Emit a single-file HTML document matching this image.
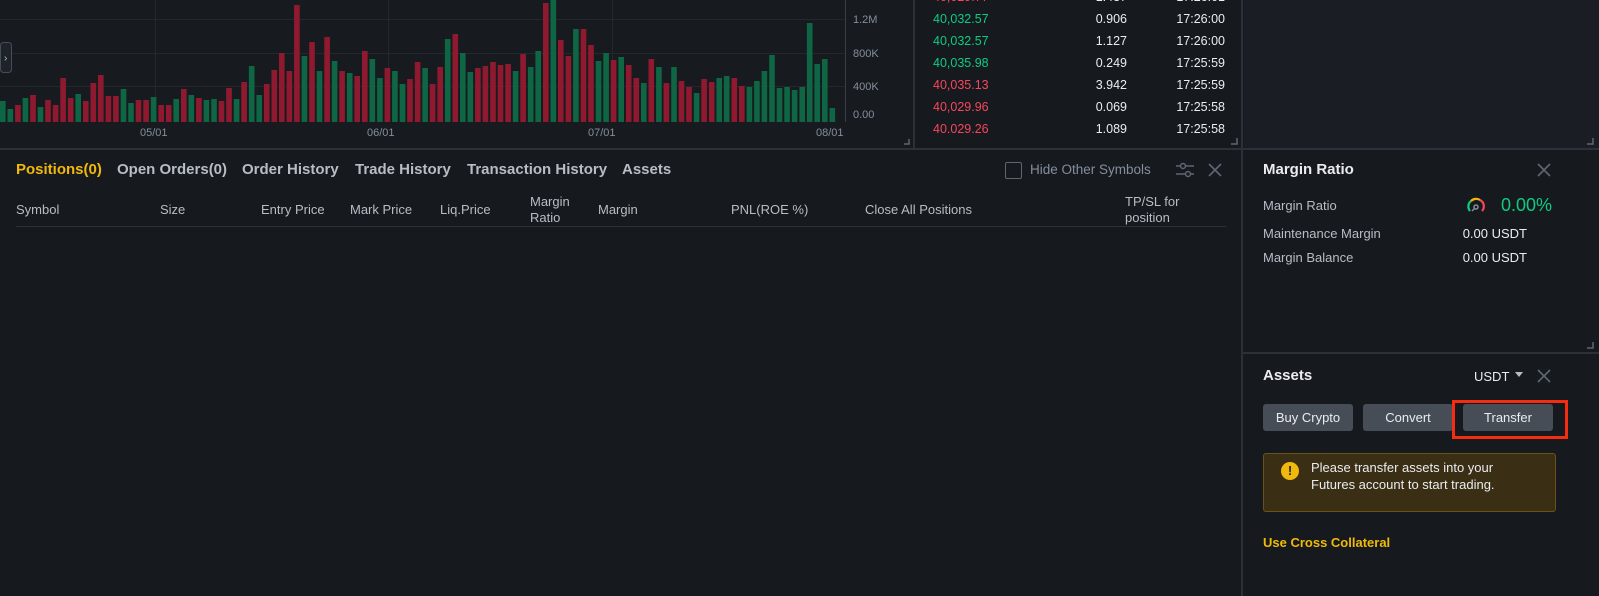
<!DOCTYPE html>
<html><head><meta charset="utf-8"><style>
*{margin:0;padding:0;box-sizing:border-box}
body{width:1599px;height:596px;background:#161a1e;font-family:"Liberation Sans",sans-serif;position:relative;overflow:hidden;color:#eaecef}
.a{position:absolute;white-space:nowrap}
.g{color:#0ecb81}.r{color:#f6465d}
.hl{position:absolute;background:#2b3139}
.tab{position:absolute;top:161px;font-size:15px;color:#b7bdc6;font-weight:bold}
.th{position:absolute;font-size:13px;color:#b7bdc6;line-height:16px}
.btn{position:absolute;top:404px;width:90px;height:27px;background:#474d57;border-radius:3px;color:#eaecef;font-size:13px;text-align:center;line-height:27px}
</style></head><body>
<div class="a" style="left:0;top:0;width:913px;height:148px;background:#171b20"></div>
<div class="a" style="left:1244px;top:0;width:355px;height:148px;background:#1a1e24"></div>
<div class="hl" style="left:0;top:148px;width:1599px;height:2px"></div>
<div class="hl" style="left:913px;top:0;width:2px;height:148px"></div>
<div class="hl" style="left:1241px;top:0;width:2px;height:596px"></div>
<div class="hl" style="left:1243px;top:352px;width:356px;height:2px"></div>
<svg class="a" style="left:0;top:0" width="913" height="148" id="ch">
<g stroke="#23272e" stroke-width="1">
<line x1="0" y1="19.5" x2="845" y2="19.5"/><line x1="0" y1="53.5" x2="845" y2="53.5"/><line x1="0" y1="86.5" x2="845" y2="86.5"/>
<line x1="155.5" y1="0" x2="155.5" y2="122"/><line x1="388.5" y1="0" x2="388.5" y2="122"/><line x1="612.5" y1="0" x2="612.5" y2="122"/>
</g>
<line x1="845.5" y1="0" x2="845.5" y2="122" stroke="#3a3f47"/>
<g id="bars"></g>
<g fill="#848e9c" font-size="11" font-family="Liberation Sans">
<text x="853" y="23">1.2M</text><text x="853" y="57">800K</text><text x="853" y="90">400K</text><text x="853" y="118">0.00</text>
<text x="140" y="136">05/01</text><text x="367" y="136">06/01</text><text x="588" y="136">07/01</text><text x="816" y="136">08/01</text>
</g>
<rect x="0.5" y="42.5" width="11" height="30" rx="3" fill="#1e2329" stroke="#474d57"/>
<text x="4" y="61" fill="#b7bdc6" font-size="10">›</text>
<path d="M904 144h5v-5" stroke="#5e6673" fill="none" stroke-width="1.5"/>
</svg>
<svg class="a" style="left:1228px;top:132px" width="12" height="14"><path d="M3 12h6v-6" stroke="#5e6673" fill="none" stroke-width="1.5"/></svg>
<svg class="a" style="left:1584px;top:132px" width="12" height="14"><path d="M3 12h6v-6" stroke="#5e6673" fill="none" stroke-width="1.5"/></svg>
<svg class="a" style="left:1584px;top:336px" width="12" height="14"><path d="M3 12h6v-6" stroke="#5e6673" fill="none" stroke-width="1.5"/></svg>
<script>
var h=[21,13,17,24,27,15,22,17,44,24,28,21,39,47,26,26,33,19,22,22,25,17,17,23,33,27,24,22,23,21,34,23,40,56,27,38,52,69,51,117,66,80,51,85,61,51,49,46,71,63,44,54,51,38,43,60,54,38,55,83,88,69,50,54,56,60,57,58,51,68,55,71,119,123,82,66,93,93,77,61,69,62,65,57,44,39,63,55,39,55,41,35,29,43,40,44,46,44,36,35,41,51,67,34,35,32,35,99,58,63,14];
var c="ggrgrgrrrrgrrrrrggrrgrrgrgrggrrgrggrrrrrgrgrgrgrrggrggrrgrrgrggrrrrrgrggrgrrgrrggrgrrgrgrgrrgrrggrrgggggggggg";
var s="";for(var i=0;i<h.length;i++){var x=(i*12.85)/1.704;var col=c[i]=='r'?'#8f1a30':'#0e6644';s+='<rect x="'+x.toFixed(1)+'" y="'+(122-h[i])+'" width="5.6" height="'+h[i]+'" fill="'+col+'"/>';}
document.getElementById('bars').innerHTML=s;
</script>
<div style="position:absolute;left:933px;top:-14px;font-size:12.5px;line-height:22px">
<div class="r">40,029.77</div><div class="g">40,032.57</div><div class="g">40,032.57</div><div class="g">40,035.98</div><div class="r">40,035.13</div><div class="r">40,029.96</div><div class="r">40.029.26</div></div>
<div style="position:absolute;left:1060px;width:67px;top:-14px;font-size:12.5px;line-height:22px;text-align:right">
<div>1.437</div><div>0.906</div><div>1.127</div><div>0.249</div><div>3.942</div><div>0.069</div><div>1.089</div></div>
<div style="position:absolute;left:1150px;width:75px;top:-14px;font-size:12.5px;line-height:22px;text-align:right">
<div>17:26:01</div><div>17:26:00</div><div>17:26:00</div><div>17:25:59</div><div>17:25:59</div><div>17:25:58</div><div>17:25:58</div></div>

<div class="tab" style="left:16px;color:#f0b90b">Positions(0)</div>
<div class="tab" style="left:117px">Open Orders(0)</div>
<div class="tab" style="left:242px">Order History</div>
<div class="tab" style="left:355px">Trade History</div>
<div class="tab" style="left:467px">Transaction History</div>
<div class="tab" style="left:622px">Assets</div>
<div class="a" style="left:1005px;top:162px;width:17px;height:17px;border:1.5px solid #5e6673;border-radius:2px"></div>
<div class="a" style="left:1030px;top:162px;font-size:13.5px;color:#848e9c">Hide Other Symbols</div>
<svg class="a" style="left:1174px;top:160px" width="22" height="20" stroke="#5e6673" fill="none" stroke-width="1.5"><path d="M2 6h18M2 14h18"/><circle cx="9" cy="6" r="2.5" fill="#161a1e"/><circle cx="14" cy="14" r="2.5" fill="#161a1e"/></svg>
<svg class="a" style="left:1207px;top:162px" width="16" height="16" stroke="#5e6673" stroke-width="1.6"><path d="M2 2l12 12M14 2L2 14"/></svg>
<div class="th" style="left:16px;top:202px">Symbol</div>
<div class="th" style="left:160px;top:202px">Size</div>
<div class="th" style="left:261px;top:202px">Entry Price</div>
<div class="th" style="left:350px;top:202px">Mark Price</div>
<div class="th" style="left:440px;top:202px">Liq.Price</div>
<div class="th" style="left:530px;top:194px">Margin<br>Ratio</div>
<div class="th" style="left:598px;top:202px">Margin</div>
<div class="th" style="left:731px;top:202px">PNL(ROE %)</div>
<div class="th" style="left:865px;top:202px">Close All Positions</div>
<div class="th" style="left:1125px;top:194px">TP/SL for<br>position</div>
<div class="hl" style="left:16px;top:226px;width:1210px;height:1px"></div>

<div class="a" style="left:1263px;top:161px;font-size:15px;font-weight:bold">Margin Ratio</div>
<svg class="a" style="left:1536px;top:162px" width="16" height="16" stroke="#5e6673" stroke-width="1.6"><path d="M2 2l12 12M14 2L2 14"/></svg>
<div class="a" style="left:1263px;top:198px;font-size:13px;color:#b7bdc6">Margin Ratio</div>
<svg class="a" style="left:1466px;top:196px" width="20" height="18" fill="none" stroke-width="2.2"><path d="M4 15A7 7 0 0 1 5 5" stroke="#0ecb81"/><path d="M5 5A7 7 0 0 1 14 4" stroke="#f0b90b"/><path d="M14 4A7 7 0 0 1 16 15" stroke="#f6465d"/><circle cx="10" cy="11" r="2" stroke="#848e9c" stroke-width="1.5"/><path d="M9 12l-3 3" stroke="#848e9c" stroke-width="1.5"/></svg>
<div class="a g" style="left:1501px;top:195px;font-size:18px">0.00%</div>
<div class="a" style="left:1263px;top:226px;font-size:13px;color:#b7bdc6">Maintenance Margin</div>
<div class="a" style="right:72px;top:226px;font-size:13px">0.00 USDT</div>
<div class="a" style="left:1263px;top:250px;font-size:13px;color:#b7bdc6">Margin Balance</div>
<div class="a" style="right:72px;top:250px;font-size:13px">0.00 USDT</div>

<div class="a" style="left:1263px;top:367px;font-size:15px;font-weight:bold">Assets</div>
<div class="a" style="left:1474px;top:369px;font-size:13px">USDT</div>
<svg class="a" style="left:1515px;top:372px" width="8" height="6"><path d="M0 0h8L4 5z" fill="#b7bdc6"/></svg>
<svg class="a" style="left:1536px;top:368px" width="16" height="16" stroke="#5e6673" stroke-width="1.6"><path d="M2 2l12 12M14 2L2 14"/></svg>
<div class="btn" style="left:1263px">Buy Crypto</div>
<div class="btn" style="left:1363px">Convert</div>
<div class="btn" style="left:1463px">Transfer</div>
<div class="a" style="left:1452px;top:400px;width:116px;height:39px;border:3px solid #f52b12"></div>
<div class="a" style="left:1263px;top:453px;width:293px;height:59px;background:#3a2f14;border:1px solid #6b5316;border-radius:3px"></div>
<div class="a" style="left:1281px;top:462px;width:18px;height:18px;border-radius:50%;background:#f0b90b;color:#1e2329;font-size:13px;font-weight:bold;text-align:center;line-height:18px">!</div>
<div class="a" style="left:1311px;top:459px;font-size:13px;line-height:17px;color:#eaecef">Please transfer assets into your<br>Futures account to start trading.</div>
<div class="a" style="left:1263px;top:535px;font-size:13px;font-weight:bold;color:#f0b90b">Use Cross Collateral</div>
</body></html>
